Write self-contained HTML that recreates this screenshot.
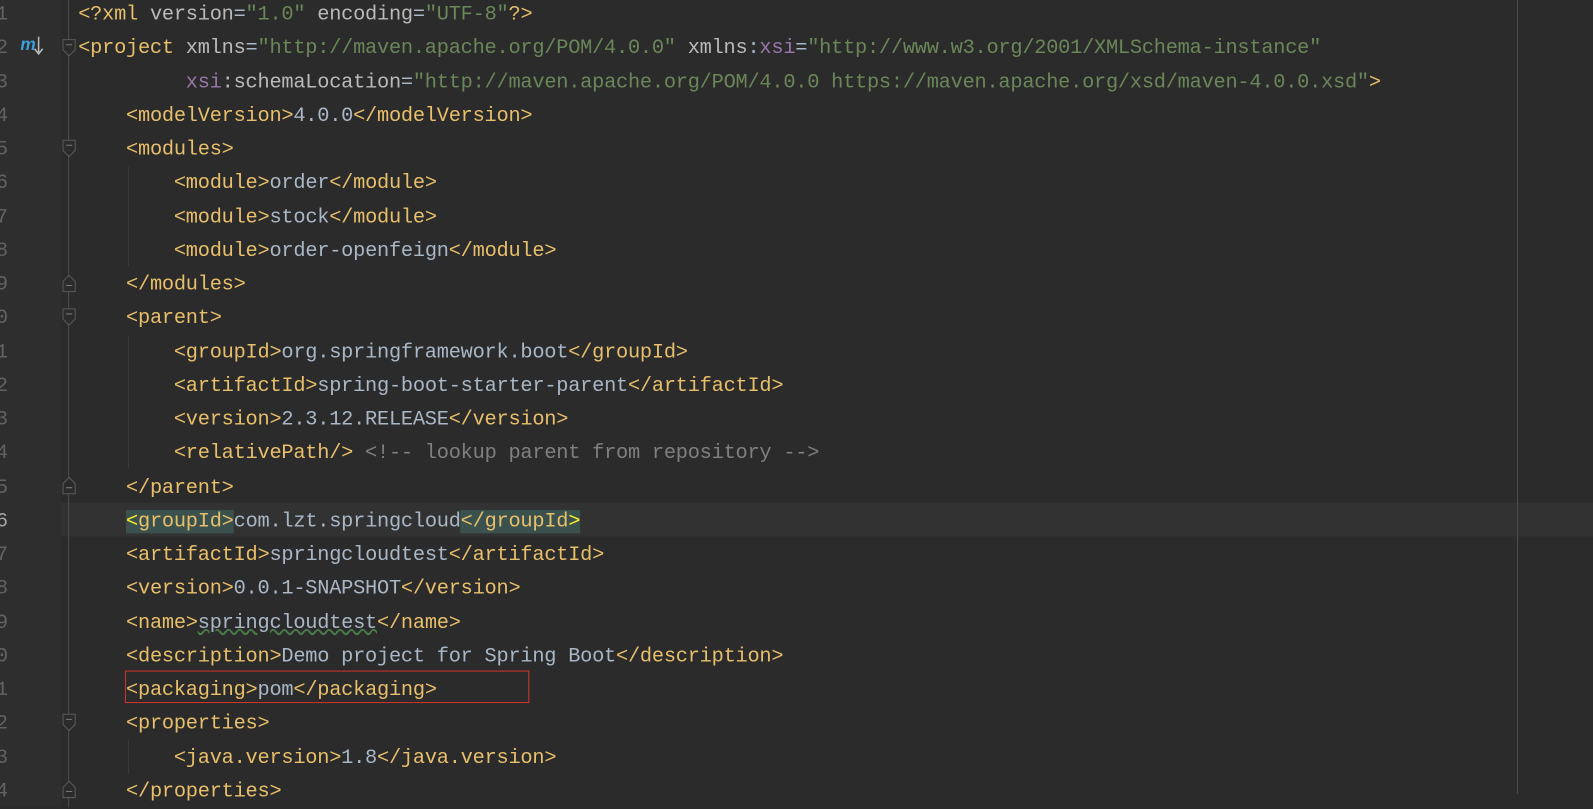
<!DOCTYPE html>
<html><head><meta charset="utf-8"><style>
html,body{margin:0;padding:0;width:1593px;height:794px;overflow:hidden;background:#2b2b2b}
.wrap{position:absolute;left:0;top:0;width:1593px;height:794px;transform:scale(1.016);transform-origin:0 0}
.g{position:absolute;left:0;top:0;width:60px;height:794px;background:#2e2e2e}
.gl{position:absolute;left:67px;top:0;width:1px;height:794px;background:#4a4a4a}
.rm{position:absolute;left:1517px;top:0;width:1px;height:794px;background:#4d4d4d}
.cur{position:absolute;left:60px;width:1533px;top:495px;height:33px;background:#323232}
.ln{position:absolute;left:-4px;top:-2px;width:20px;color:#606366;font:20px "Liberation Mono",monospace}
.ln div,.code div{height:33.25px;line-height:33.25px}
.code{position:absolute;left:77px;top:-2px;white-space:pre;font:20px "Liberation Mono",monospace;letter-spacing:-0.24px;color:#a9b7c6}
.t{color:#e8bf6a}.a{color:#bababa}.v{color:#6a8759}.c{color:#808080}.x{color:#9876aa}
.m{background:#3b514d}.y{color:#ffef28}
.ig{position:absolute;width:1px;background:#3a3a3a}
.f{position:absolute;left:61px}
.box{position:absolute;left:123px;top:660px;width:396px;height:30px;border:1.5px solid #d2352a}
</style></head><body>
<div class="wrap">
<div class="g"></div>
<div class="cur"></div>
<div class="gl"></div>
<div class="ig" style="left:126px;top:164px;height:98px"></div>
<div class="ig" style="left:126px;top:330px;height:131px"></div>
<div class="ig" style="left:126px;top:729px;height:33px"></div>
<svg style="position:absolute;left:20px;top:33px" width="24" height="24"><text x="0" y="16" font-family="Liberation Sans" font-style="italic" font-weight="bold" font-size="17" fill="#3d9fd9">m</text><path d="M18 3 V19 M14 15 L18 20 L22 15" stroke="#bbb" stroke-width="1.5" fill="none"/></svg>
<svg class="f" style="top:38px" width="14" height="20"><path d="M1 1H13V11L7 17L1 11Z" fill="#2b2b2b" stroke="#5a5a5a"/><path d="M4 6H10" stroke="#777"/></svg>
<svg class="f" style="top:137px" width="14" height="20"><path d="M1 1H13V11L7 17L1 11Z" fill="#2b2b2b" stroke="#5a5a5a"/><path d="M4 6H10" stroke="#777"/></svg>
<svg class="f" style="top:268px" width="14" height="20"><path d="M1 19H13V9L7 3L1 9Z" fill="#2b2b2b" stroke="#5a5a5a"/><path d="M4 13H10" stroke="#777"/></svg>
<svg class="f" style="top:303px" width="14" height="20"><path d="M1 1H13V11L7 17L1 11Z" fill="#2b2b2b" stroke="#5a5a5a"/><path d="M4 6H10" stroke="#777"/></svg>
<svg class="f" style="top:467px" width="14" height="20"><path d="M1 19H13V9L7 3L1 9Z" fill="#2b2b2b" stroke="#5a5a5a"/><path d="M4 13H10" stroke="#777"/></svg>
<svg class="f" style="top:702px" width="14" height="20"><path d="M1 1H13V11L7 17L1 11Z" fill="#2b2b2b" stroke="#5a5a5a"/><path d="M4 6H10" stroke="#777"/></svg>
<svg class="f" style="top:766px" width="14" height="20"><path d="M1 19H13V9L7 3L1 9Z" fill="#2b2b2b" stroke="#5a5a5a"/><path d="M4 13H10" stroke="#777"/></svg>

<div class="ln"><div>1</div><div>2</div><div>3</div><div>4</div><div>5</div><div>6</div><div>7</div><div>8</div><div>9</div><div>0</div><div>1</div><div>2</div><div>3</div><div>4</div><div>5</div><div style="color:#a4a3a3">6</div><div>7</div><div>8</div><div>9</div><div>0</div><div>1</div><div>2</div><div>3</div><div>4</div></div>

<div class="code"><div><span class="t">&lt;?xml </span><span class="a">version</span>=<span class="v">"1.0"</span> <span class="a">encoding</span>=<span class="v">"UTF-8"</span><span class="t">?&gt;</span></div><div><span class="t">&lt;project </span><span class="a">xmlns</span>=<span class="v">"http://maven.apache.org/POM/4.0.0"</span> <span class="a">xmlns</span>:<span class="x">xsi</span>=<span class="v">"http://www.w3.org/2001/XMLSchema-instance"</span></div><div>         <span class="x">xsi</span><span class="a">:schemaLocation</span>=<span class="v">"http://maven.apache.org/POM/4.0.0 https://maven.apache.org/xsd/maven-4.0.0.xsd"</span><span class="t">&gt;</span></div><div>    <span class="t">&lt;modelVersion&gt;</span>4.0.0<span class="t">&lt;/modelVersion&gt;</span></div><div>    <span class="t">&lt;modules&gt;</span></div><div>        <span class="t">&lt;module&gt;</span>order<span class="t">&lt;/module&gt;</span></div><div>        <span class="t">&lt;module&gt;</span>stock<span class="t">&lt;/module&gt;</span></div><div>        <span class="t">&lt;module&gt;</span>order-openfeign<span class="t">&lt;/module&gt;</span></div><div>    <span class="t">&lt;/modules&gt;</span></div><div>    <span class="t">&lt;parent&gt;</span></div><div>        <span class="t">&lt;groupId&gt;</span>org.springframework.boot<span class="t">&lt;/groupId&gt;</span></div><div>        <span class="t">&lt;artifactId&gt;</span>spring-boot-starter-parent<span class="t">&lt;/artifactId&gt;</span></div><div>        <span class="t">&lt;version&gt;</span>2.3.12.RELEASE<span class="t">&lt;/version&gt;</span></div><div>        <span class="t">&lt;relativePath/&gt;</span> <span class="c">&lt;!-- lookup parent from repository --&gt;</span></div><div>    <span class="t">&lt;/parent&gt;</span></div><div>    <span class="t m"><span class="y">&lt;</span>groupId&gt;</span>com.lzt.springcloud<span class="t m">&lt;/groupId<span class="y">&gt;</span></span></div><div>    <span class="t">&lt;artifactId&gt;</span>springcloudtest<span class="t">&lt;/artifactId&gt;</span></div><div>    <span class="t">&lt;version&gt;</span>0.0.1-SNAPSHOT<span class="t">&lt;/version&gt;</span></div><div>    <span class="t">&lt;name&gt;</span><span style="text-decoration:underline wavy #4a7a4a">springcloudtest</span><span class="t">&lt;/name&gt;</span></div><div>    <span class="t">&lt;description&gt;</span>Demo project for Spring Boot<span class="t">&lt;/description&gt;</span></div><div>    <span class="t">&lt;packaging&gt;</span>pom<span class="t">&lt;/packaging&gt;</span></div><div>    <span class="t">&lt;properties&gt;</span></div><div>        <span class="t">&lt;java.version&gt;</span>1.8<span class="t">&lt;/java.version&gt;</span></div><div>    <span class="t">&lt;/properties&gt;</span></div></div>
<div class="box"></div>
</div>
<div class="rm"></div>
</body></html>
